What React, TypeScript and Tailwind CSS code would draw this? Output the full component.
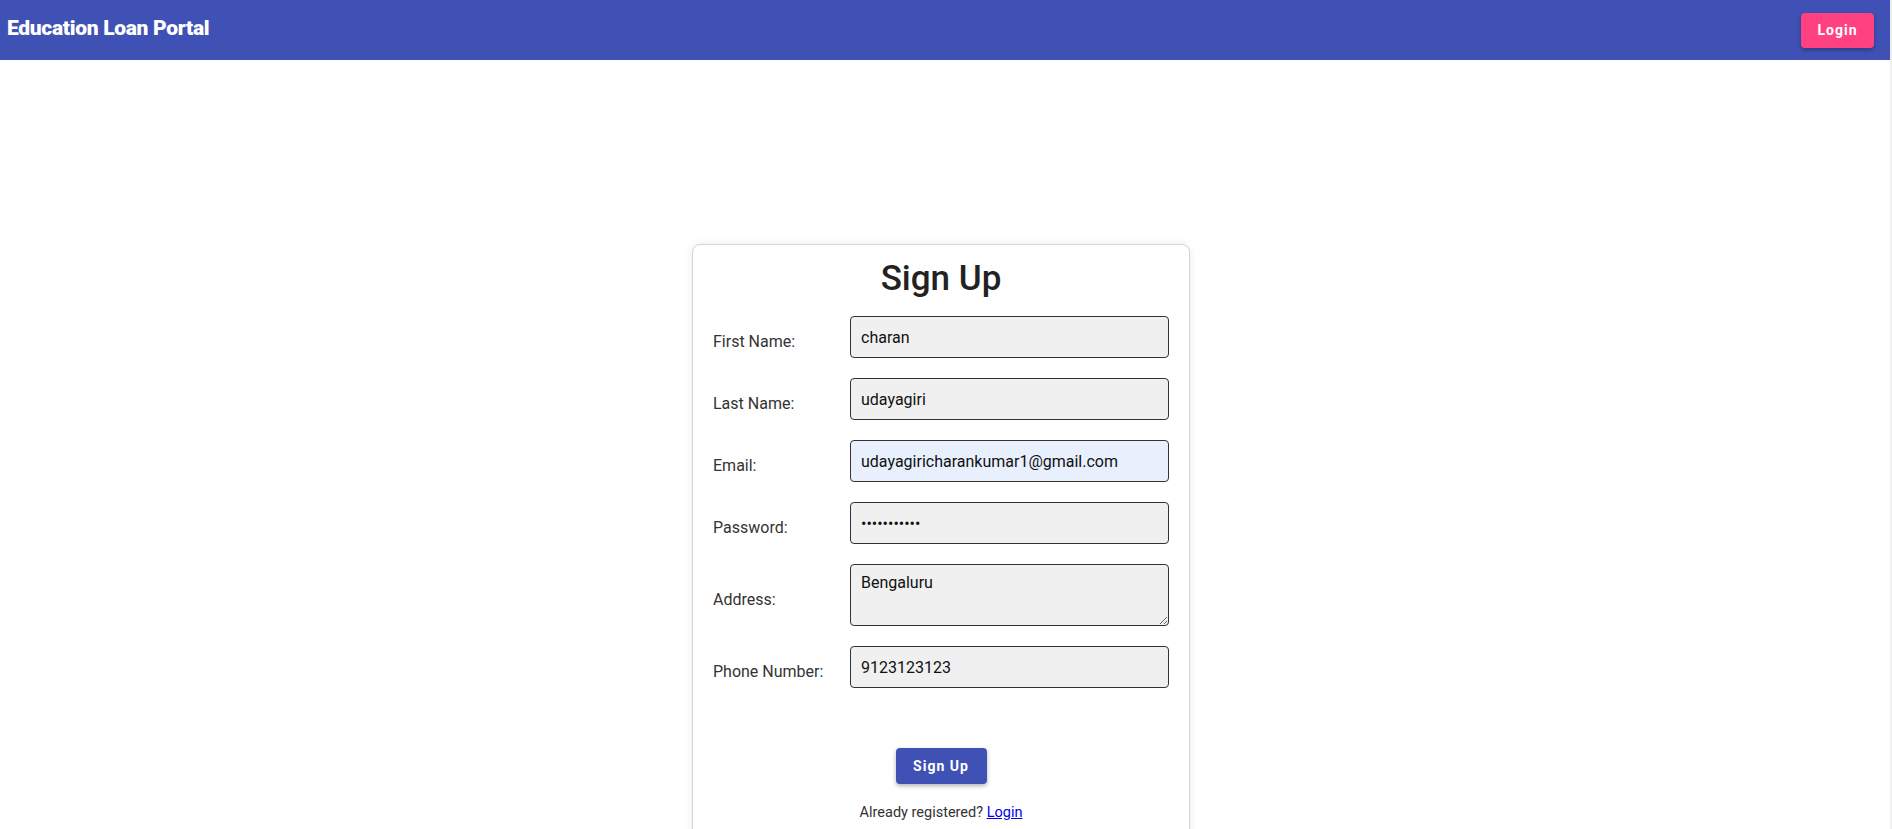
import { useState } from "react";

const fieldClass =
  "w-[320px] h-[42px] rounded-[4px] border border-[#333] bg-[#f0f0f0] pl-[10px] pr-2 text-[16px] text-[#111] outline-none";

function Row({ label, children }: { label: string; children: React.ReactNode }) {
  return (
    <div className="flex items-center">
      <label className="mt-[10px] w-[137px] shrink-0 text-[16px] leading-6 text-[#333]">{label}</label>
      {children}
    </div>
  );
}

export default function App() {
  const [form] = useState({
    first: "charan",
    last: "udayagiri",
    email: "udayagiricharankumar1@gmail.com",
    password: "charan12345",
    address: "Bengaluru",
    phone: "9123123123",
  });

  return (
    <div className="h-screen overflow-hidden border-r-2 border-[#efefef] bg-white font-['Roboto',sans-serif]">
      <header className="flex h-[60px] items-center justify-between bg-[#3f51b5] pl-[7px] pr-4">
        <h1 className="mb-[2px] text-[21px] font-black tracking-[-0.3px] text-white">Education Loan Portal</h1>
        <button className="h-[35px] w-[73px] rounded-[4px] bg-[#ff4081] text-[14px] font-bold tracking-[1px] text-white shadow-[0_2px_4px_rgba(0,0,0,0.3)]">
          Login
        </button>
      </header>

      <main className="flex justify-center pt-[184px] pr-2">
        <div className="w-[498px] rounded-[8px] border border-[#d4d4d4] bg-white px-5 pt-4 pb-10 shadow-[0_0_8px_rgba(0,0,0,0.08)]">
          <h2 className="mb-[19px] text-center text-[35px] font-medium leading-[36px] text-[#222]">Sign Up</h2>
          <div className="flex flex-col gap-5">
            <Row label="First Name:">
              <input className={fieldClass} defaultValue={form.first} />
            </Row>
            <Row label="Last Name:">
              <input className={fieldClass} defaultValue={form.last} />
            </Row>
            <Row label="Email:">
              <input className={fieldClass + " !bg-[#e8f0fe]"} defaultValue={form.email} />
            </Row>
            <Row label="Password:">
              <input type="password" className={fieldClass} defaultValue={form.password} />
            </Row>
            <Row label="Address:">
              <textarea
                className="h-[62px] w-[320px] rounded-[4px] border border-[#333] bg-[#f0f0f0] pl-[10px] pr-2 pt-[6px] text-[16px] leading-6 text-[#111] outline-none"
                defaultValue={form.address}
              />
            </Row>
            <Row label="Phone Number:">
              <input className={fieldClass} defaultValue={form.phone} />
            </Row>
          </div>
          <div className="mt-[60px] flex justify-center">
            <button className="h-[36px] w-[91px] rounded-[4px] bg-[#3f51b5] text-[14px] font-bold tracking-[1px] text-white shadow-[0_2px_4px_rgba(0,0,0,0.3)]">
              Sign Up
            </button>
          </div>
          <p className="mt-[19px] text-center text-[14.5px] leading-5 text-[#333]">
            Already registered?{" "}
            <a href="#" className="text-[#0000ee] underline">
              Login
            </a>
          </p>
        </div>
      </main>
    </div>
  );
}
